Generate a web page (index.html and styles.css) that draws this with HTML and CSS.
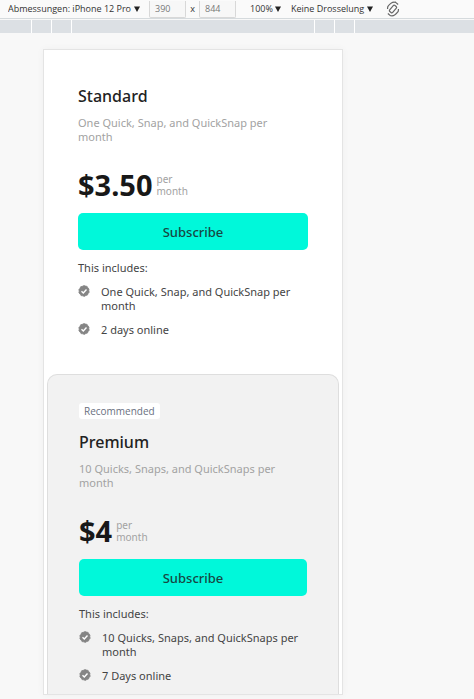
FILE: index.html
```html
<!DOCTYPE html>
<html lang="en">
<head>
<meta charset="utf-8">
<meta name="viewport" content="width=device-width, initial-scale=1">
<title>Subscription plans</title>
<link rel="stylesheet" href="styles.css">
</head>
<body>
<svg class="defs" aria-hidden="true">
  <symbol id="caret" viewBox="0 0 6 6"><path d="M0 0.5h6L3 6z" fill="#222"/></symbol>
  <symbol id="check" viewBox="0 0 12 12"><path d="M6 .6l1.5.5 1.6.3.8 1.4 1.1 1.2-.2 1.6.4 1.6-1.1 1.3-.7 1.6-1.6.4L6.300 11.400l-1.600-.6-1.700-.2-.8-1.500L.9 7.900l.3-1.700-.3-1.600L2 3.300l.7-1.600 1.700-.4z" fill="#858585" stroke="#858585" stroke-width=".8" stroke-linejoin="round"/><path d="M3.500 6.200l1.800 1.700 3.200-3.400" fill="none" stroke="#fff" stroke-width="1.400"/></symbol>
</svg>
<header class="toolbar" lang="de">
  <label class="picker picker-device"><select aria-label="Abmessungen"><option>Abmessungen: iPhone 12 Pro</option></select><svg class="caret"><use href="#caret"/></svg></label>
  <input class="size" type="text" value="390" aria-label="Breite">
  <span class="times">x</span>
  <input class="size" type="text" value="844" aria-label="Höhe">
  <label class="picker picker-zoom"><select aria-label="Zoom"><option>100%</option></select><svg class="caret"><use href="#caret"/></svg></label>
  <label class="picker picker-speed"><select aria-label="Drosselung"><option>Keine Drosselung</option></select><svg class="caret"><use href="#caret"/></svg></label>
  <button class="rotate" type="button" aria-label="Drehen">
    <svg viewBox="0 0 16 16" fill="none" stroke="#666" stroke-width="1.200"><g transform="rotate(40 8 8)"><rect x="6" y="4" width="4" height="8" rx="1.200"/><path d="M6 1.200C3.200 2 2.200 5.500 2.400 9.500M10 14.800c2.800-.8 3.800-4.300 3.600-8.300M5 1.200h4M7 14.800h4M2.400 9.500l1.400 2M13.600 6.500l-1.400-2"/></g></svg>
  </button>
</header>
<div class="ruler"><i class="edge"></i><i></i><i></i><i class="middle"></i><i></i><i></i></div>
<main class="stage">
  <div class="device">
    <section class="plan">
      <h2>Standard</h2>
      <p class="summary">One Quick, Snap, and QuickSnap per month</p>
      <div class="price"><strong>$3.50</strong><span>per<br>month</span></div>
      <button class="subscribe" type="button">Subscribe</button>
      <p class="includes">This includes:</p>
      <ul>
        <li><svg class="check"><use href="#check"/></svg><span>One Quick, Snap, and QuickSnap per month</span></li>
        <li><svg class="check"><use href="#check"/></svg><span>2 days online</span></li>
      </ul>
    </section>
    <section class="plan featured">
      <span class="badge">Recommended</span>
      <h2>Premium</h2>
      <p class="summary">10 Quicks, Snaps, and QuickSnaps per month</p>
      <div class="price"><strong>$4</strong><span>per<br>month</span></div>
      <button class="subscribe" type="button">Subscribe</button>
      <p class="includes">This includes:</p>
      <ul>
        <li><svg class="check"><use href="#check"/></svg><span>10 Quicks, Snaps, and QuickSnaps per month</span></li>
        <li><svg class="check"><use href="#check"/></svg><span>7 Days online</span></li>
      </ul>
    </section>
  </div>
</main>
</body>
</html>
```
FILE: styles.css
```css
* { box-sizing: border-box; }
body {
  margin: 0;
  background: #f8f8f8;
  color: #444;
  font: 11px/14px "Noto Sans", "Open Sans", sans-serif;
}
h2, p, ul { margin: 0; padding: 0; }
button, input, select { font: inherit; color: inherit; }
.defs { display: none; }

.toolbar {
  display: flex;
  align-items: center;
  height: 19px;
  padding-left: 8px;
  border-bottom: 1px solid #d5dadd;
  background: #fafafa;
  font: 9px/16px "Open Sans", sans-serif;
  color: #333;
  white-space: nowrap;
}
.picker { display: flex; align-items: center; gap: 2px; }
.picker select {
  appearance: none;
  margin: 0;
  padding: 0;
  border: 0;
  background: none;
}
.picker-zoom { margin-left: 14px; }
.picker-speed { margin-left: 10px; }
.caret { width: 6px; height: 6px; }
.picker-device { margin-right: 9px; }
.size {
  width: 37px;
  height: 17px;
  padding: 0 5px;
  border: 1px solid #d8d8d8;
  border-top: 0;
  border-radius: 0 0 2px 2px;
  background: #f7f7f7;
  color: #777;
}
.times { width: 13px; text-align: center; }
.rotate {
  display: flex;
  margin: 0 0 0 12px;
  padding: 0;
  border: 0;
  background: none;
}
.rotate svg { width: 16px; height: 16px; }

.ruler {
  display: flex;
  height: 13px;
  margin-top: 1px;
  background: #dce0e4;
}
.ruler i { width: 20px; border-right: 1px solid #fff; }
.ruler .edge { width: 32px; }
.ruler .middle { flex: 1; }
.ruler::after { content: ""; width: 119px; }

.stage { padding: 16px 131px 4px 43px; }
.device {
  padding: 0 3px;
  border: 1px solid #e4e4e4;
  background: #fff;
  box-shadow: 0 0 8px #0000000a;
}
.plan { padding: 35px 31px 37px; }
.featured {
  padding: 28px 31px 11px;
  border: 1px solid #dedede;
  border-bottom: 0;
  border-radius: 10px 10px 0 0;
  background: #f2f2f2;
}
.badge {
  display: inline-block;
  margin-bottom: 12px;
  padding: 0 5px;
  border-radius: 3px;
  background: #fff;
  color: #697080;
  font: 500 10px/16px "Open Sans", sans-serif;
  vertical-align: top;
}
h2 {
  color: #222;
  font-size: 16px;
  line-height: 22px;
  font-weight: 500;
}
.summary {
  margin-top: 9px;
  padding-right: 24px;
  color: #a2a2a2;
}
.price {
  display: flex;
  align-items: center;
  gap: 4px;
  margin: 21px 0 8px;
}
.price strong {
  color: #181818;
  font-size: 29px;
  line-height: 40px;
}
.price span {
  color: #a2a2a2;
  font-size: 10px;
  line-height: 12px;
}
.subscribe {
  display: block;
  width: 100%;
  height: 37px;
  padding: 0;
  border: 0;
  border-radius: 5px;
  background: #00f8da;
  color: #174743;
  font-size: 13px;
  font-weight: 500;
}
.includes { margin: 11px 0 10px; }
ul { list-style: none; }
li {
  display: flex;
  gap: 11px;
}
li + li { margin-top: 10px; }
.check {
  flex: none;
  width: 12px;
  height: 12px;
}
```
